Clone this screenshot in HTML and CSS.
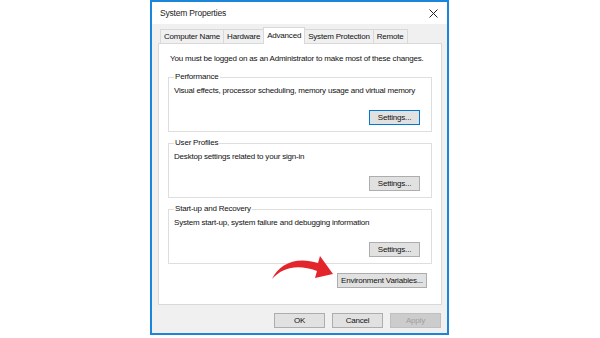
FILE: index.html
```html
<!DOCTYPE html>
<html>
<head>
<meta charset="utf-8">
<link rel="stylesheet" href="styles.css">
</head>
<body>
<div class="dialog">
  <div class="titlebar">
    <span class="title">System Properties</span>
    <svg class="close" width="9" height="9" viewBox="0 0 9 9"><path d="M0.5 0.5 L8.5 8.5 M8.5 0.5 L0.5 8.5" stroke="#222" stroke-width="1" fill="none"/></svg>
  </div>
  <div class="body">
    <div class="tabs">
      <div class="tab">Computer Name</div>
      <div class="tab">Hardware</div>
      <div class="tab active">Advanced</div>
      <div class="tab">System Protection</div>
      <div class="tab">Remote</div>
    </div>
    <div class="panel">
      <p class="notice">You must be logged on as an Administrator to make most of these changes.</p>
      <fieldset class="group first">
        <legend>Performance</legend>
        <p class="desc">Visual effects, processor scheduling, memory usage and virtual memory</p>
        <div class="btnrow"><button class="btn default">Settings...</button></div>
      </fieldset>
      <fieldset class="group">
        <legend>User Profiles</legend>
        <p class="desc">Desktop settings related to your sign-in</p>
        <div class="btnrow"><button class="btn">Settings...</button></div>
      </fieldset>
      <fieldset class="group">
        <legend>Start-up and Recovery</legend>
        <p class="desc">System start-up, system failure and debugging information</p>
        <div class="btnrow"><button class="btn">Settings...</button></div>
      </fieldset>
      <div class="envrow"><button class="btn env">Environment Variables...</button></div>
    </div>
    <div class="footer">
      <button class="btn">OK</button>
      <button class="btn">Cancel</button>
      <button class="btn disabled">Apply</button>
    </div>
  </div>
  <svg class="arrow" width="70" height="30" viewBox="0 0 70 30"><path d="M6 25 C13 10 30 2 52 9 L54 2 L67 20 L49 24 L51 17 C32 10 17 13 6 25 Z" fill="#e3262b"/></svg>
</div>
</body>
</html>
```
FILE: styles.css
```css
html, body {
  margin: 0;
  background: #ffffff;
}
body {
  font-family: "Liberation Sans", Arial, sans-serif;
  font-size: 8px;
  letter-spacing: -0.2px;
  color: #111;
}
.dialog {
  position: relative;
  width: 299px;
  height: 335px;
  margin-left: 150px;
  box-sizing: border-box;
  border: 2px solid #1b86d9;
  background: #f0f0f0;
  display: flex;
  flex-direction: column;
}
.titlebar {
  height: 22px;
  flex: none;
  background: #ffffff;
  display: flex;
  align-items: center;
  justify-content: space-between;
  padding: 0 9px 0 8px;
}
.title {
  font-size: 8.5px;
  color: #222;
}
.body {
  flex: 1;
  display: flex;
  flex-direction: column;
  padding: 3px 5px 0 6px;
}
.tabs {
  display: flex;
  align-items: flex-end;
  height: 16px;
  padding-left: 2px;
}
.tab {
  box-sizing: border-box;
  height: 14px;
  line-height: 13px;
  padding: 0 3px;
  border: 1px solid #d9d9d9;
  border-bottom: none;
  background: #f0f0f0;
  margin-right: -1px;
  white-space: nowrap;
}
.tab.active {
  position: relative;
  z-index: 1;
  height: 17px;
  line-height: 15px;
  margin-bottom: -1px;
  background: #ffffff;
}
.panel {
  box-sizing: border-box;
  height: 262px;
  border: 1px solid #d9d9d9;
  background: #ffffff;
  padding: 10px 9px 0 9px;
}
.notice {
  margin: 0 0 0 2px;
  line-height: 10px;
  white-space: nowrap;
}
.group {
  min-width: 0;
  margin: 6px 0 0;
  padding: 0 11px 6px 5px;
  border: 1px solid #dedede;
}
.group.first {
  margin-top: 8px;
}
.group legend {
  padding: 0 1px;
  line-height: 10px;
}
.desc {
  margin: 4px 0 0;
  line-height: 10px;
  white-space: nowrap;
}
.btnrow {
  display: flex;
  justify-content: flex-end;
  margin-top: 14px;
}
.btn {
  box-sizing: border-box;
  width: 51px;
  height: 15px;
  padding: 0;
  border: 1px solid #adadad;
  background: #e1e1e1;
  font-family: inherit;
  font-size: 8px;
  letter-spacing: inherit;
  color: #111;
  line-height: 13px;
}
.btn.default {
  border-color: #0078d7;
}
.btn.env {
  width: 90px;
}
.btn.disabled {
  background: #cccccc;
  border-color: #bfbfbf;
  color: #a0a0a0;
}
.envrow {
  display: flex;
  justify-content: flex-end;
  margin-top: 9px;
  padding-right: 5px;
}
.footer {
  display: flex;
  justify-content: flex-end;
  gap: 7px;
  margin-top: 8px;
  padding-right: 1px;
}
.arrow {
  position: absolute;
  left: 114px;
  top: 252px;
}
```
